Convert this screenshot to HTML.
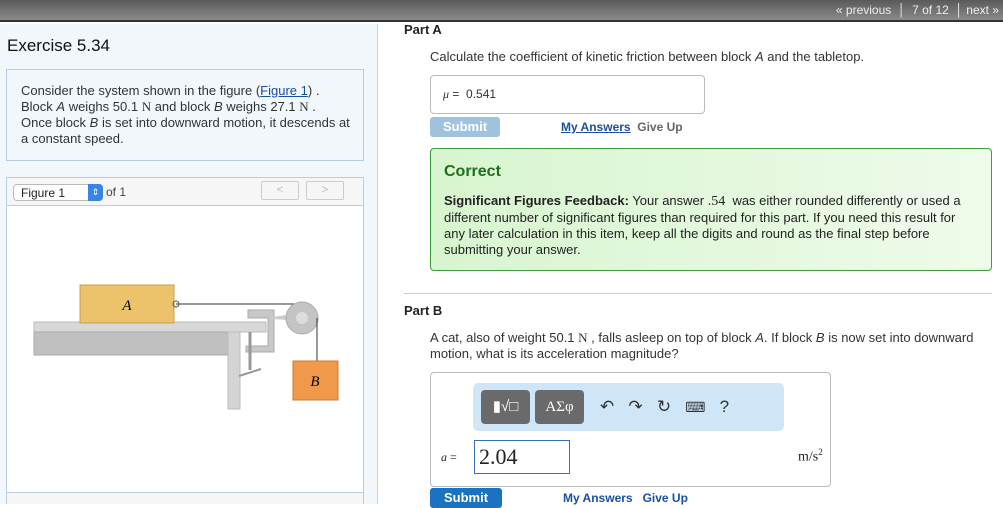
<!DOCTYPE html>
<html><head><meta charset="utf-8"><style>
*{box-sizing:border-box;margin:0;padding:0}
body{width:1003px;height:504px;overflow:hidden;background:#fff;font-family:"Liberation Sans",Arial,sans-serif;position:relative;color:#222}
.abs{position:absolute}
.top{left:0;top:0;width:1003px;height:22px;background:linear-gradient(#5a5a5a,#8a8a8a);border-bottom:2px solid #333}
.nav{right:4px;top:3px;font-size:12px;color:#eee}
.left{left:0;top:24px;width:378px;height:480px;background:#f2f7fb;border-right:1px solid #c8d6e2}
.serif{font-family:"Liberation Serif",serif}
a{color:#1a4fa0}
.btn{border-radius:3px;color:#fff;font-weight:bold;font-size:13px;text-align:center}
</style></head><body>
<div class="abs top"></div>
<div class="abs nav">« previous &nbsp;│&nbsp; 7 of 12 &nbsp;│ next »</div>
<div class="abs left"></div>
<div class="abs" style="left:7px;top:36px;font-size:17px;color:#111">Exercise 5.34</div>
<div class="abs" style="left:6px;top:69px;width:358px;height:92px;border:1px solid #b9cde0;background:#f2f7fb;padding:13px 0 0 14px;font-size:13px;line-height:16px;color:#333">Consider the system shown in the figure (<a href="#">Figure 1</a>) .<br>Block <i>A</i> weighs 50.1 <span class="serif">N</span> and block <i>B</i> weighs 27.1 <span class="serif">N</span> .<br>Once block <i>B</i> is set into downward motion, it descends at<br>a constant speed.</div>
<div class="abs" style="left:6px;top:177px;width:358px;height:327px;border:1px solid #b9cde0;background:#fff"></div>
<div class="abs" style="left:7px;top:178px;width:356px;height:28px;background:#f6f6f6;border-bottom:1px solid #b9cde0"></div>
<div class="abs" style="left:13px;top:184px;width:90px;height:17px;border:1px solid #bbb;border-radius:4px;background:#fff;font-size:12px;padding:1px 0 0 7px">Figure 1</div>
<div class="abs" style="left:88px;top:184px;width:15px;height:17px;background:#3a84e6;border-radius:0 4px 4px 0;color:#fff;font-size:9px;text-align:center;line-height:17px">⇕</div>
<div class="abs" style="left:106px;top:185px;font-size:12px;color:#444">of 1</div>
<div class="abs" style="left:261px;top:181px;width:38px;height:19px;border:1px solid #ccc;border-radius:2px;color:#bbb;text-align:center;font-size:11px;line-height:17px">&lt;</div>
<div class="abs" style="left:306px;top:181px;width:38px;height:19px;border:1px solid #ccc;border-radius:2px;color:#bbb;text-align:center;font-size:11px;line-height:17px">&gt;</div>
<div class="abs" style="left:7px;top:492px;width:356px;height:12px;background:#f6f6f6;border-top:1px solid #b9cde0"></div>
<svg class="abs" style="left:0;top:270px" width="380" height="160">
<rect x="34" y="52" width="232" height="10" fill="#d8d8d8" stroke="#bbb"/>
<rect x="34" y="62" width="195" height="23" fill="#c0c0c0" stroke="#aaa"/>
<rect x="228" y="62" width="12" height="77" fill="#d4d4d4" stroke="#bbb"/>
<rect x="80" y="15" width="94" height="38" fill="#ecc36a" stroke="#c9a040"/>
<text x="127" y="40" font-family="Liberation Serif" font-style="italic" font-size="15" text-anchor="middle">A</text>
<line x1="176" y1="34" x2="300" y2="34" stroke="#333"/>
<circle cx="176" cy="34" r="3" fill="none" stroke="#555"/>
<path d="M248 48v-8h26v42h-28v-6h22v-28z" fill="#c8c8c8" stroke="#aaa"/>
<line x1="250" y1="62" x2="250" y2="100" stroke="#999" stroke-width="3"/>
<line x1="239" y1="106" x2="261" y2="99" stroke="#999" stroke-width="2"/>
<path d="M272 47l30-4v8l-30-2z" fill="#ccc"/>
<circle cx="302" cy="48" r="16" fill="#c4c4c4" stroke="#aaa"/>
<circle cx="302" cy="48" r="6" fill="#ddd"/>
<line x1="317" y1="48" x2="317" y2="92" stroke="#333"/>
<rect x="293" y="91" width="45" height="39" fill="#f0994a" stroke="#d07a30"/>
<text x="315" y="116" font-family="Liberation Serif" font-style="italic" font-size="15" text-anchor="middle">B</text>
</svg>
<div class="abs" style="left:404px;top:22px;font-size:13px;font-weight:bold;color:#222">Part A</div>
<div class="abs" style="left:430px;top:49px;font-size:13px;color:#333">Calculate the coefficient of kinetic friction between block <i>A</i> and the tabletop.</div>
<div class="abs" style="left:430px;top:75px;width:275px;height:39px;border:1px solid #bbb;border-radius:4px;padding:11px 0 0 12px;font-size:12px;color:#333"><i class="serif">μ</i> = &nbsp;0.541</div>
<div class="abs btn" style="left:430px;top:117px;width:70px;height:20px;background:#9fc3dd;line-height:20px">Submit</div>
<div class="abs" style="left:561px;top:120px;font-size:12px;font-weight:bold"><a href="#">My Answers</a> &nbsp;<span style="color:#666">Give Up</span></div>
<div class="abs" style="left:430px;top:148px;width:562px;height:123px;border:1px solid #3aa03a;border-radius:4px;background:linear-gradient(90deg,#d8f5cf,#eefbea);padding:14px 0 0 13px">
<div style="font-size:16px;font-weight:bold;color:#1e6e1e">Correct</div>
<div style="margin-top:12px;font-size:13px;line-height:16px;color:#222"><b>Significant Figures Feedback:</b> Your answer <span class="serif" style="font-size:14px">.54</span> &nbsp;was either rounded differently or used a<br>different number of significant figures than required for this part. If you need this result for<br>any later calculation in this item, keep all the digits and round as the final step before<br>submitting your answer.</div></div>
<div class="abs" style="left:404px;top:293px;width:588px;height:1px;background:#ccc"></div>
<div class="abs" style="left:404px;top:303px;font-size:13px;font-weight:bold">Part B</div>
<div class="abs" style="left:430px;top:330px;font-size:13px;line-height:16px;color:#333">A cat, also of weight 50.1 <span class="serif">N</span> , falls asleep on top of block <i>A</i>. If block <i>B</i> is now set into downward<br>motion, what is its acceleration magnitude?</div>
<div class="abs" style="left:430px;top:372px;width:401px;height:115px;border:1px solid #bbb;border-radius:4px"></div>
<div class="abs" style="left:473px;top:383px;width:311px;height:48px;background:#cfe6f8;border-radius:5px"></div>
<div class="abs" style="left:481px;top:390px;width:49px;height:34px;background:#6a6a6a;border-radius:4px;color:#fff;font-size:15px;line-height:34px;text-align:center">▮√□</div>
<div class="abs serif" style="left:535px;top:390px;width:49px;height:34px;background:#6a6a6a;border-radius:4px;color:#fff;font-size:15px;line-height:34px;text-align:center">ΑΣφ</div>
<div class="abs" style="left:600px;top:397px;font-size:17px;color:#333">↶ &nbsp; ↷ &nbsp; ↻ &nbsp; <span style="font-size:14px">⌨</span> &nbsp; ?</div>
<div class="abs serif" style="left:441px;top:450px;font-size:12px;font-style:italic">a <span style="font-style:normal">=</span></div>
<div class="abs serif" style="left:474px;top:440px;width:96px;height:34px;border:1px solid #3a6fc0;font-size:22px;padding:3px 0 0 4px">2.04</div>
<div class="abs serif" style="left:798px;top:447px;font-size:14px">m/s<sup style="font-size:9px">2</sup></div>
<div class="abs btn" style="left:430px;top:488px;width:72px;height:20px;background:#1a72c0;line-height:20px">Submit</div>
<div class="abs" style="left:563px;top:491px;font-size:12px;font-weight:bold;color:#1a4fa0">My Answers &nbsp;&nbsp;Give Up</div>
</body></html>
